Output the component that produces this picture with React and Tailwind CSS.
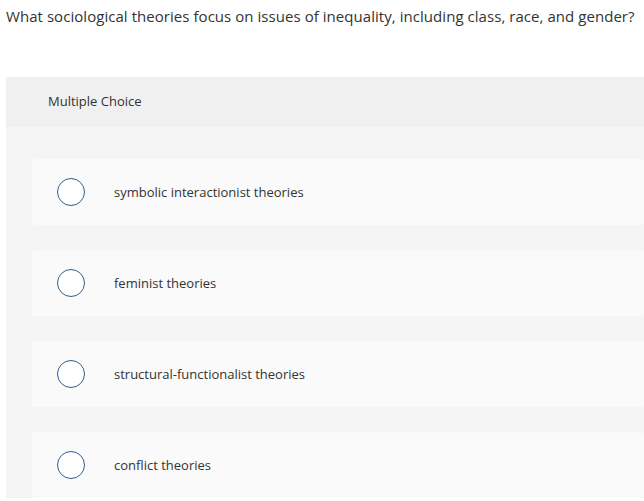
const OPTIONS = [
  "symbolic interactionist theories",
  "feminist theories",
  "structural-functionalist theories",
  "conflict theories",
];

export default function App() {
  return (
    <div
      className="w-[644px] h-[501px] overflow-hidden bg-white text-[#333]"
      style={{ fontFamily: "'Open Sans', 'Liberation Sans', sans-serif" }}
    >
      <p className="pl-[6px] pt-[6px] text-[15px] leading-[20px] tracking-[0.05px]">
        What sociological theories focus on issues of inequality, including class, race, and gender?
      </p>
      <div className="ml-[6px] mt-[51px] bg-[#f5f5f5]">
        <div className="h-[50px] bg-[#f0f0f0] pl-[42px] flex items-center text-[13px]">
          Multiple Choice
        </div>
        <div className="pt-[32px] pl-[26px] flex flex-col gap-[25px]">
          {OPTIONS.map((opt) => (
            <div
              key={opt}
              className="h-[66px] bg-[#fafafa] rounded-[3px] flex items-center"
            >
              <span className="ml-[25px] w-[28px] h-[28px] rounded-full border-[1.5px] border-[#2f5f8c] bg-white shrink-0" />
              <span className="ml-[29px] pt-[2px] text-[13px]">{opt}</span>
            </div>
          ))}
        </div>
      </div>
    </div>
  );
}
